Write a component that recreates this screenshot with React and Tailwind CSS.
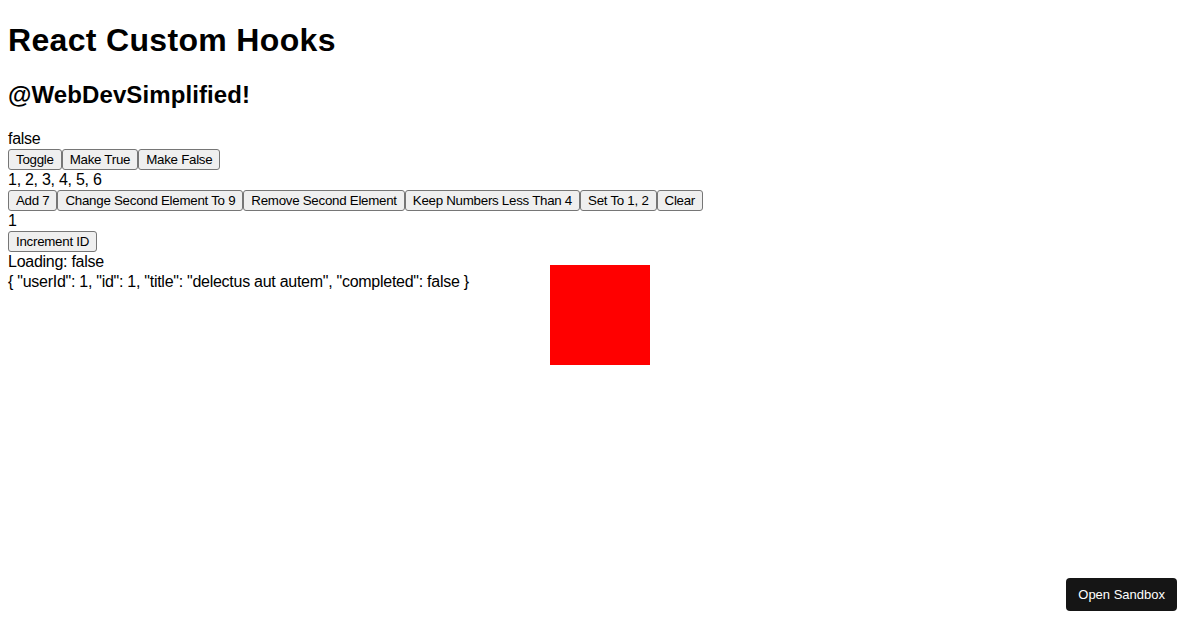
import React from 'react';

const btnCls =
  'inline-block bg-[#efefef] border border-[#767676] rounded-[3px] px-[7px] py-[2px] text-[13.333px] leading-[normal] tracking-[-0.27px] text-black';

const Btn = ({ children }) => <button type="button" className={btnCls}>{children}</button>;

const Line = ({ children }) => <div className="h-[20px] leading-[20px] tracking-[-0.27px]">{children}</div>;

export default function App() {
  return (
    <div className="min-h-[630px] bg-white text-black text-base leading-[normal] font-['Liberation_Sans',Arial,sans-serif] px-2">
      <h1 className="mt-[21.44px] mb-[21.44px] text-[32px] leading-[38px] tracking-[0.33px] font-bold">React Custom Hooks</h1>
      <h2 className="mt-[19.92px] mb-[20px] text-[24px] leading-[28px] tracking-[0.1px] font-bold">@WebDevSimplified!</h2>

      <Line>false</Line>
      <div className="flex">
        <Btn>Toggle</Btn><Btn>Make True</Btn><Btn>Make False</Btn>
      </div>

      <Line>1, 2, 3, 4, 5, 6</Line>
      <div className="flex">
        <Btn>Add 7</Btn><Btn>Change Second Element To 9</Btn><Btn>Remove Second Element</Btn><Btn>Keep Numbers Less Than 4</Btn><Btn>Set To 1, 2</Btn><Btn>Clear</Btn>
      </div>

      <Line>1</Line>
      <div className="flex">
        <Btn>Increment ID</Btn>
      </div>

      <div className="flex items-start">
        <div className="w-[542px] shrink-0">
          <Line>Loading: false</Line>
          <Line>{'{ "userId": 1, "id": 1, "title": "delectus aut autem", "completed": false }'}</Line>
        </div>
        <div className="mt-[13px] w-[100px] h-[100px] bg-[#ff0000]" />
      </div>

      <button
        type="button"
        className="fixed right-[23px] bottom-[19px] h-[33px] px-3 rounded-[4px] bg-[#151515] text-white text-[13px] font-['Liberation_Sans',Arial,sans-serif]"
      >
        Open Sandbox
      </button>
    </div>
  );
}
